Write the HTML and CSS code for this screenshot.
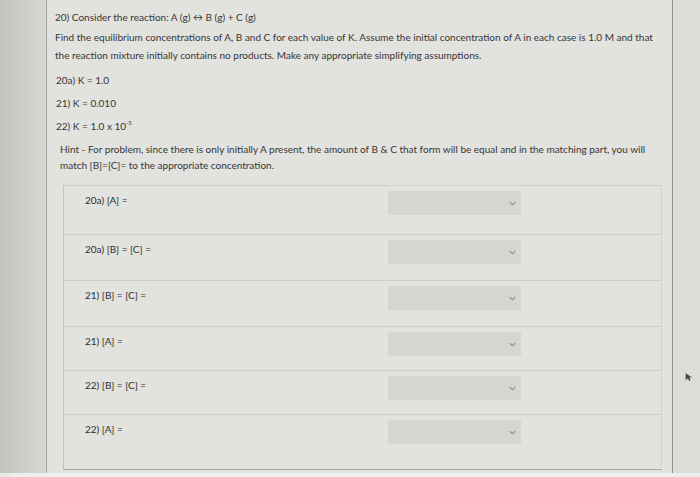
FILE: index.html
```html
<!DOCTYPE html>
<html>
<head>
<meta charset="utf-8">
<link rel="stylesheet" href="styles.css">
</head>
<body>
<div class="screen">
  <div class="edge-left"></div>
  <main class="page">
    <p class="q-title">20) Consider the reaction: A (g) &#8596; B (g) + C (g)</p>
    <p class="q-body">Find the equilibrium concentrations of A, B and C for each value of K. Assume the initial concentration of A in each case is 1.0 M and that the reaction mixture initially contains no products. Make any appropriate simplifying assumptions.</p>
    <p class="k k1">20a) K = 1.0</p>
    <p class="k">21) K = 0.010</p>
    <p class="k">22) K = 1.0 x 10<sup>-5</sup></p>
    <p class="hint">Hint - For problem, since there is only initially A present, the amount of B &amp; C that form will be equal and in the matching part, you will match [B]=[C]= to the appropriate concentration.</p>
    <div class="answers">
      <div class="row h49"><span class="label">20a) [A] =</span><div class="select"><svg class="chev" viewBox="0 0 8 5"><path d="M1 1l3 3 3-3"/></svg></div></div>
      <div class="row h46"><span class="label">20a) [B] = [C] =</span><div class="select"><svg class="chev" viewBox="0 0 8 5"><path d="M1 1l3 3 3-3"/></svg></div></div>
      <div class="row h46"><span class="label">21) [B] = [C] =</span><div class="select"><svg class="chev" viewBox="0 0 8 5"><path d="M1 1l3 3 3-3"/></svg></div></div>
      <div class="row h44"><span class="label">21) [A] =</span><div class="select"><svg class="chev" viewBox="0 0 8 5"><path d="M1 1l3 3 3-3"/></svg></div></div>
      <div class="row h44"><span class="label">22) [B] = [C] =</span><div class="select"><svg class="chev" viewBox="0 0 8 5"><path d="M1 1l3 3 3-3"/></svg></div></div>
      <div class="row last"><span class="label">22) [A] =</span><div class="select"><svg class="chev" viewBox="0 0 8 5"><path d="M1 1l3 3 3-3"/></svg></div></div>
    </div>
  </main>
  <div class="edge-right">
    <svg class="cursor" viewBox="0 0 10 14"><path d="M1 1v10l3-3 2 4 2-1-2-4h4z"/></svg>
  </div>
</div>
<div class="bottom-strip"></div>
</body>
</html>
```
FILE: styles.css
```css
html, body {
  margin: 0;
  padding: 0;
}
body {
  width: 700px;
  height: 477px;
  overflow: hidden;
  background: #e9e9e6;
  font-family: Lato, "Open Sans", sans-serif;
  color: #363636;
}
.screen {
  display: flex;
  height: 473px;
}
.edge-left {
  width: 46px;
  flex: none;
  background: linear-gradient(90deg, #c2c2be 0%, #cfcfcb 60%, #d8d8d4 100%);
  border-right: 1px solid #a3a39f;
}
.page {
  width: 626px;
  flex: none;
  background: #e2e2de;
  border-right: 1px solid #8f8f8b;
  padding: 8px 0 0 8px;
  box-sizing: border-box;
}
.edge-right {
  flex: 1;
  background: #dcdcd8;
  position: relative;
}
.cursor {
  position: absolute;
  left: 12px;
  top: 372px;
  width: 7px;
  height: 11px;
  fill: #444;
}
.bottom-strip {
  height: 4px;
  background: #eeeeec;
  margin-left: 10px;
}
p {
  margin: 0;
  font-size: 10px;
  line-height: 18px;
  max-width: 604px;
}
.q-body {
  margin-top: 2px;
}
.k {
  margin-top: 5px;
  padding-left: 1px;
}
.k1 {
  margin-top: 7px;
}
sup {
  font-size: 6px;
  line-height: 0;
  vertical-align: 5px;
}
.hint {
  margin-top: 6px;
  padding-left: 5px;
  line-height: 16px;
}
.answers {
  margin: 12px 10px 0 8px;
  border-left: 1px solid #c3c3bf;
  border-right: 1px solid #d0d0cc;
  border-bottom: 1px solid #a9a9a5;
  height: 284px;
  display: flex;
  flex-direction: column;
}
.row {
  flex: none;
  display: flex;
  align-items: flex-start;
  border-top: 1px solid #cdcdc9;
  padding-left: 21px;
  box-sizing: border-box;
}
.h49 { height: 49px; }
.h46 { height: 46px; }
.h44 { height: 44px; }
.last {
  flex: 1;
}
.label {
  width: 303px;
  flex: none;
  margin-top: 5px;
  line-height: 18px;
  font-size: 10px;
  color: #2f2f2f;
}
.select {
  margin-top: 5px;
  width: 133px;
  height: 24px;
  background: #d5d5d1;
  border-radius: 2px;
  position: relative;
}
.chev {
  position: absolute;
  right: 5px;
  top: 10px;
  width: 7px;
  height: 5px;
  fill: none;
  stroke: #8a8a86;
  stroke-width: 1.3;
}
```
